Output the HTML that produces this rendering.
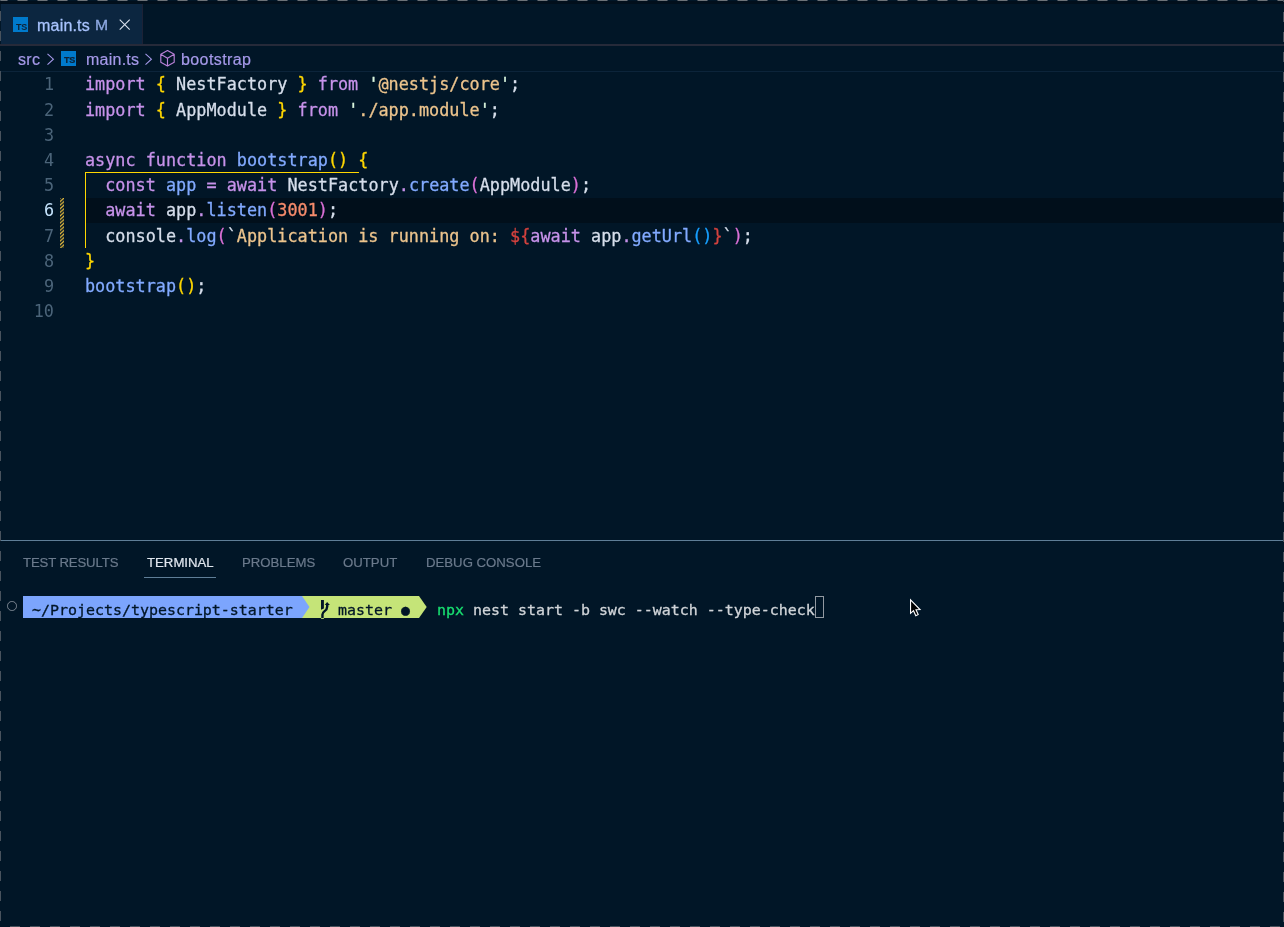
<!DOCTYPE html>
<html lang="en">
<head>
<meta charset="utf-8">
<title>main.ts — typescript-starter</title>
<style>
*{box-sizing:border-box;margin:0;padding:0}
html,body{width:1284px;height:927px;overflow:hidden;background:#011627}
body{position:relative;font-family:"Liberation Sans",sans-serif;color:#d6deeb}
.abs{position:absolute}
.code,.term,.ptab,.tablabel,.tabm,.crumbs{will-change:transform}
/* outer dashed frame */
.dash-t,.dash-b{left:0;width:1284px;height:1px;background:linear-gradient(90deg,#6c7278 0 10px,transparent 10px 20px) repeat-x;background-size:20px 1px}
.dash-l,.dash-r{top:0;width:1px;height:927px;background:linear-gradient(180deg,#48525d 0 10px,transparent 10px 20px) repeat-y;background-size:1px 20px}
.dash-b{background-image:linear-gradient(90deg,#48525d 0 10px,transparent 10px 20px)}
.topshade{left:0;top:1px;width:1284px;height:3px;background:#010f1c}
.dash-t{top:0;background-position:-2.5px 0}
.dash-b{top:926px;background-position:10px 0}
.dash-l{left:0;background-position:0 11px}
.dash-r{left:1283px;background-position:0 12px}
/* tab bar */
.tabbar{left:0;top:4px;width:1284px;height:42px;background:#011627;border-bottom:2px solid #262a39}
.tab{left:1px;top:4px;width:141px;height:40px;background:#0c2640}
.ts{background:#007acc;width:15.4px;height:15.4px;overflow:hidden}
.ts span{position:absolute;right:1.2px;bottom:0.6px;font:bold 9px/10px "Liberation Sans",sans-serif;color:#0d2236;letter-spacing:-0.2px;will-change:transform}
.tablabel{left:37px;top:16px;font-size:16px;line-height:20px;color:#a8c3fd;white-space:nowrap;letter-spacing:0.2px;-webkit-text-stroke:0.3px currentColor}
.tabm{left:94.8px;top:15px;font-size:14.3px;line-height:20px;color:#8da8e2;-webkit-text-stroke:0.3px currentColor;transform:scaleX(1.1);transform-origin:0 0}
/* breadcrumbs */
.crumbs{left:0;top:46px;width:1284px;height:26px;font-size:16px;line-height:26px;color:#a599e9;white-space:nowrap;letter-spacing:0.3px;-webkit-text-stroke:0.2px currentColor}
.crumbs .abs{top:0}
.crumbs span.abs{top:1px}
/* editor */
.code{font-family:"DejaVu Sans Mono","Liberation Mono",monospace;font-size:16.8px;letter-spacing:0.0157px;line-height:25.2px;white-space:pre;-webkit-text-stroke:0.3px currentColor}
.ln{-webkit-text-stroke:0;left:0;width:54px;text-align:right;color:#4b6479;height:25.2px}
.ln.cur{color:#c5e4fd}
.line{left:85px;height:25.2px;color:#d6deeb}
.k{color:#c792ea}.f{color:#82aaff}.s{color:#ecc48d}.q{color:#d9f5dd}.n{color:#f78c6c}
.b1{color:#ffd700}.b2{color:#da70d6}.b3{color:#179fff}.t{color:#d3423e}
.curline{left:85px;top:198px;width:1198px;height:25px;background:#010f1b}
/* panel */
.panelborder{left:0;top:540px;width:1284px;height:1px;background:#5f7e97}
.ptab{top:554px;font-size:13.2px;line-height:18px;color:#6b7a8c;white-space:nowrap;letter-spacing:0;-webkit-text-stroke:0.2px currentColor}
.ptab.on{color:#e0e6ee}
.punder{left:144px;top:577px;width:72px;height:1px;background:#5f7e97}
.term{font-family:"DejaVu Sans Mono","Liberation Mono",monospace;font-size:14.95px;line-height:22px;white-space:pre;top:599px;height:22px;-webkit-text-stroke:0.3px currentColor}
</style>
</head>
<body>
<div class="abs topshade"></div>
<div class="abs tabbar"></div>
<div class="abs tab"></div>
<div class="abs" style="left:142px;top:4px;width:1px;height:40px;background:#1c2236"></div>
<div class="abs" style="left:1px;top:71px;width:1282px;height:1px;background:#0c243a"></div>
<div class="abs ts" style="left:12.8px;top:16.8px"><span>TS</span></div>
<div class="abs tablabel">main.ts</div>
<div class="abs tabm">M</div>
<svg class="abs" style="left:118px;top:17.6px" width="13" height="13" viewBox="0 0 13 13"><path d="M1.7 1.7 L11.7 11.7 M11.7 1.7 L1.7 11.7" stroke="#d6deeb" stroke-width="1.15" fill="none"/></svg>

<div class="abs crumbs">
  <span class="abs" style="left:18px">src</span>
  <svg class="abs" style="left:46px;top:7px" width="9" height="12" viewBox="0 0 9 12"><path d="M1.5 0.8 L7.4 6.2 L1.5 11.6" stroke="#a599e9" stroke-width="1.1" fill="none"/></svg>
  <div class="abs ts" style="left:60.6px;top:4.7px"><span>TS</span></div>
  <span class="abs" style="left:86px;letter-spacing:0.24px">main.ts</span>
  <svg class="abs" style="left:144px;top:7px" width="9" height="12" viewBox="0 0 9 12"><path d="M1.5 0.8 L7.4 6.2 L1.5 11.6" stroke="#a599e9" stroke-width="1.1" fill="none"/></svg>
  <svg class="abs" style="left:158px;top:2px" width="20" height="22" viewBox="158 48 20 22"><path d="M167.5 50.5 L174.2 54.3 L174.2 62.3 L167.5 66.1 L160.8 62.3 L160.8 54.3 Z M160.8 54.3 L167.5 58.2 L174.2 54.3 M167.5 58.2 L167.5 66.1" stroke="#b981d8" stroke-width="1.15" fill="none" stroke-linejoin="round"/></svg>
  <span class="abs" style="left:181px;letter-spacing:0.4px">bootstrap</span>
</div>

<div class="abs curline"></div>
<!-- line numbers -->
<div class="abs code ln" style="top:72.4px">1</div>
<div class="abs code ln" style="top:97.6px">2</div>
<div class="abs code ln" style="top:122.8px">3</div>
<div class="abs code ln" style="top:148px">4</div>
<div class="abs code ln" style="top:173.2px">5</div>
<div class="abs code ln cur" style="top:198.4px">6</div>
<div class="abs code ln" style="top:223.6px">7</div>
<div class="abs code ln" style="top:248.8px">8</div>
<div class="abs code ln" style="top:274px">9</div>
<div class="abs code ln" style="top:299.2px">10</div>
<!-- gutter modified marker -->
<svg class="abs" style="left:60px;top:198px" width="4" height="50" viewBox="0 0 4 50"><defs><pattern id="hatch" width="4" height="3.6" patternUnits="userSpaceOnUse"><path d="M-1 4.5 L5 -0.9 M-1 8.1 L5 2.7 M-1 0.9 L5 -4.5" stroke="#e2b93d" stroke-width="1.25"/></pattern></defs><rect width="4" height="50" fill="url(#hatch)"/></svg>
<!-- bracket guides -->
<div class="abs" style="left:85px;top:172px;width:274px;height:1px;background:#ffd700"></div>
<div class="abs" style="left:85px;top:172px;width:1px;height:76px;background:#ffd700"></div>
<!-- code -->
<div class="abs code line" style="top:72.4px"><span class="k">import</span> <span class="b1">{</span> NestFactory <span class="b1">}</span> <span class="k">from</span> <span class="q">'</span><span class="s">@nestjs/core</span><span class="q">'</span>;</div>
<div class="abs code line" style="top:97.6px"><span class="k">import</span> <span class="b1">{</span> AppModule <span class="b1">}</span> <span class="k">from</span> <span class="q">'</span><span class="s">./app.module</span><span class="q">'</span>;</div>
<div class="abs code line" style="top:148px"><span class="k">async</span> <span class="k">function</span> <span class="f">bootstrap</span><span class="b1">()</span> <span class="b1">{</span></div>
<div class="abs code line" style="top:173.2px">  <span class="k">const</span> <span class="f">app</span> <span class="k">=</span> <span class="k">await</span> NestFactory<span class="k">.</span><span class="f">create</span><span class="b2">(</span>AppModule<span class="b2">)</span>;</div>
<div class="abs code line" style="top:198.4px">  <span class="k">await</span> app<span class="k">.</span><span class="f">listen</span><span class="b2">(</span><span class="n">3001</span><span class="b2">)</span>;</div>
<div class="abs code line" style="top:223.6px">  console<span class="k">.</span><span class="f">log</span><span class="b2">(</span>`<span class="s">Application is running on: </span><span class="t">${</span><span class="k">await</span> app<span class="k">.</span><span class="f">getUrl</span><span class="b3">()</span><span class="t">}</span>`<span class="b2">)</span>;</div>
<div class="abs code line" style="top:248.8px"><span class="b1">}</span></div>
<div class="abs code line" style="top:274px"><span class="f">bootstrap</span><span class="b1">()</span>;</div>

<!-- panel -->
<div class="abs panelborder"></div>
<div class="abs ptab" style="left:23px;letter-spacing:-0.14px">TEST RESULTS</div>
<div class="abs ptab on" style="left:147px">TERMINAL</div>
<div class="abs ptab" style="left:242px">PROBLEMS</div>
<div class="abs ptab" style="left:343px">OUTPUT</div>
<div class="abs ptab" style="left:426.3px">DEBUG CONSOLE</div>
<div class="abs punder"></div>

<!-- terminal -->
<div class="abs" style="left:7.3px;top:601.3px;width:9.6px;height:9.6px;border:1.2px solid #7b8591;border-radius:50%"></div>
<svg class="abs" style="left:23px;top:596px" width="410" height="22" viewBox="0 0 410 22">
  <path d="M279 0 H396 L403.7 11 L396 22 H279 Z" fill="#c5e478"/>
  <path d="M0 0 H279 L286.5 11 L279 22 H0 Z" fill="#7ca5fd"/>
</svg>
<div class="abs term" style="left:32px;color:#011627">~/Projects/typescript-starter</div>
<svg class="abs" style="left:318px;top:596px" width="16" height="24" viewBox="318 596 16 24"><path d="M321 600 H323.9 V608.5 L321 609.8 Z" fill="#011627"/><path d="M322.45 618 V614.6 C322.45 610.6 327.2 611.6 327.2 606.4 V604.6" stroke="#011627" stroke-width="2.4" fill="none"/><path d="M324.7 605 L327.1 602.1 L329.9 605 Z" fill="#011627"/><rect x="321.1" y="618" width="2.8" height="0.9" fill="#c5e478"/></svg>
<div class="abs term" style="left:338px;color:#011627">master ●</div>
<div class="abs term" style="left:437px;color:#d0d4d8"><span style="color:#18de70">npx</span> nest start -b swc --watch --type-check</div>
<div class="abs" style="left:815px;top:596px;width:9px;height:22px;border:1px solid #9299a1"></div>
<!-- mouse pointer -->
<svg class="abs" style="left:904px;top:594px" width="24" height="28" viewBox="904 594 24 28"><path d="M910.55 599.9 L910.55 613.3 L913.5 610.7 L915.8 615.7 L918.2 614.6 L916.0 609.7 L920.0 609.6 Z" fill="#000" stroke="#fff" stroke-width="1.1" stroke-linejoin="miter"/></svg>

<div class="abs dash-t"></div><div class="abs dash-b"></div><div class="abs dash-l"></div><div class="abs dash-r"></div>
</body>
</html>
